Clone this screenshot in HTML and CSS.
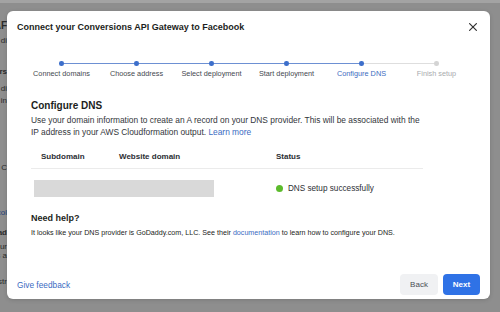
FILE: index.html
```html
<!DOCTYPE html>
<html lang="en">
<head>
<meta charset="utf-8">
<title>Connect your Conversions API Gateway to Facebook</title>
<link rel="stylesheet" href="styles.css">
</head>
<body>
<div class="page">
  <div class="page-top"></div>
  <div class="page-side">
    <div class="frag g0 big">Conversions AF</div>
    <div class="frag g1">Edit di</div>
    <div class="frag g2 bold">Servers</div>
    <div class="frag g3">Add di</div>
    <div class="frag g4">Open in </div>
    <div class="frag g5">Use C</div>
    <div class="frag g6 blue">Protocol</div>
    <div class="frag g7 bold">Upload</div>
    <div class="frag g8">Your</div>
    <div class="frag g9">is a</div>
    <div class="frag g10">Instr</div>
  </div>
</div>

<div class="modal" role="dialog">
  <div class="m-head">
    <h1 class="m-title">Connect your Conversions API Gateway to Facebook</h1>
    <button class="close" aria-label="Close">
      <svg viewBox="0 0 8 8" width="8" height="8"><path d="M0.6 0.6 L7.4 7.4 M7.4 0.6 L0.6 7.4" stroke="#333" stroke-width="1.2" stroke-linecap="round" fill="none"/></svg>
    </button>
  </div>

  <ol class="stepper">
    <li class="step done first"><span class="dot"></span><span class="lbl">Connect domains</span></li>
    <li class="step done"><span class="dot"></span><span class="lbl">Choose address</span></li>
    <li class="step done"><span class="dot"></span><span class="lbl">Select deployment</span></li>
    <li class="step done"><span class="dot"></span><span class="lbl">Start deployment</span></li>
    <li class="step current"><span class="dot"></span><span class="lbl">Configure DNS</span></li>
    <li class="step todo last"><span class="dot"></span><span class="lbl">Finish setup</span></li>
  </ol>

  <section class="content">
    <h2 class="sec-title">Configure DNS</h2>
    <p class="desc">Use your domain information to create an A record on your DNS provider. This will be associated with the<br>IP address in your AWS Cloudformation output. <a class="link" href="#">Learn more</a></p>

    <div class="table">
      <div class="thead">
        <span>Subdomain</span><span>Website domain</span><span>Status</span>
      </div>
      <div class="trow">
        <span class="bar"></span>
        <span class="status"><i class="ok"></i>DNS setup successfully</span>
      </div>
    </div>

    <h3 class="help-title">Need help?</h3>
    <p class="help">It looks like your DNS provider is GoDaddy.com, LLC. See their <a class="link" href="#">documentation</a> to learn how to configure your DNS.</p>
  </section>

  <footer class="m-foot">
    <a class="feedback" href="#">Give feedback</a>
    <div class="actions">
      <button class="btn back">Back</button>
      <button class="btn next">Next</button>
    </div>
  </footer>
</div>
</body>
</html>
```

FILE: styles.css
```css
* { box-sizing: border-box; }
html, body {
  margin: 0;
  padding: 0;
  width: 500px;
  height: 312px;
  overflow: hidden;
}
body {
  font-family: "Liberation Sans", Arial, Helvetica, sans-serif;
  background: #8e8e8e;
  color: #1c1e21;
  position: relative;
}

/* background page (dimmed) */
.page {
  width: 500px;
  height: 312px;
}
.page-top {
  height: 3px;
  background: #a3a3a3;
}
.page-side {
  width: 7px;
  overflow: hidden;
}
.frag {
  display: flex;
  justify-content: flex-end;
  white-space: nowrap;
  font-size: 8px;
  line-height: 9px;
  height: 9px;
  color: #2a2a2a;
}
.frag.big { font-size: 10px; font-weight: bold; }
.frag.bold { font-weight: bold; }
.frag.blue { color: #1f3f78; }
.g0 { margin-top: 17.5px; }
.g1 { margin-top: 6.5px; }
.g2 { margin-top: 22px; }
.g3 { margin-top: 8px; }
.g4 { margin-top: 3px; }
.g5 { margin-top: 58px; }
.g6 { margin-top: 36px; }
.g7 { margin-top: 11px; }
.g8 { margin-top: 5px; }
.g9 { margin-top: 0; }
.g10 { margin-top: 17px; }

/* modal */
.modal {
  position: absolute;
  left: 7px;
  top: 11px;
  width: 483px;
  height: 288px;
  background: #fff;
  border-radius: 6px;
  box-shadow: 0 1px 4px rgba(0,0,0,0.15);
  display: flex;
  flex-direction: column;
}
.m-head {
  display: flex;
  justify-content: space-between;
  align-items: center;
  padding: 10px 10px 0 10px;
}
.m-title {
  margin: 0;
  font-size: 9px;
  line-height: 12px;
  font-weight: bold;
  color: #1c1e21;
}
.close {
  border: 0;
  background: none;
  padding: 0;
  width: 8px;
  height: 8px;
  margin-right: 3px;
  display: flex;
}

/* stepper */
.stepper {
  list-style: none;
  margin: 28px 0 0 0;
  padding: 0 0 0 17px;
  display: grid;
  grid-template-columns: repeat(6, 75px);
}
.step {
  position: relative;
  display: flex;
  flex-direction: column;
  align-items: center;
}
.step::before, .step::after {
  content: "";
  position: absolute;
  top: 1.5px;
  height: 1px;
  width: 50%;
  background: #6d90d3;
}
.step::before { left: 0; }
.step::after { right: 0; }
.step.first::before, .step.last::after { display: none; }
.step.current::after, .step.todo::before { background: #dedede; }
.dot {
  position: relative;
  z-index: 1;
  width: 4.5px;
  height: 4.5px;
  border-radius: 50%;
  background: #3d6fcb;
}
.step.todo .dot { background: #d4d4d4; }
.lbl {
  margin-top: 3.5px;
  font-size: 7.3px;
  line-height: 10px;
  color: #45494f;
  white-space: nowrap;
}
.step.current .lbl { color: #3d6cc0; }
.step.todo .lbl { color: #a9abae; }

/* content */
.content {
  padding: 0 24px;
}
.sec-title {
  margin: 20px 0 0 0;
  font-size: 10px;
  line-height: 13px;
  font-weight: bold;
  color: #1c1e21;
}
.desc {
  margin: 1.7px 0 0 0;
  font-size: 8.4px;
  line-height: 12px;
  color: #33363b;
  white-space: nowrap;
}
.link {
  color: #3b6bc2;
  text-decoration: none;
}
.table {
  margin-top: 14.5px;
  width: 392px;
}
.thead {
  display: grid;
  grid-template-columns: 78px 157px 1fr;
  padding: 0 0 6px 10px;
  font-size: 8px;
  line-height: 10px;
  font-weight: bold;
  color: #2b2e33;
  border-bottom: 1px solid #ebebeb;
}
.trow {
  display: grid;
  grid-template-columns: 245px 1fr;
  align-items: center;
  padding-top: 11px;
}
.bar {
  display: block;
  margin-left: 3px;
  width: 180px;
  height: 17px;
  background: #d9d9d9;
}
.status {
  display: flex;
  align-items: center;
  gap: 4.6px;
  font-size: 8.2px;
  line-height: 10px;
  color: #2b2e33;
}
.ok {
  display: block;
  width: 7.3px;
  height: 7.3px;
  border-radius: 50%;
  background: #5cbb2c;
}
.help-title {
  margin: 15.4px 0 0 0;
  font-size: 9px;
  line-height: 11px;
  font-weight: bold;
  color: #1c1e21;
}
.help {
  margin: 4.7px 0 0 0;
  font-size: 7.15px;
  line-height: 10px;
  color: #1c1e21;
  white-space: nowrap;
}

/* footer */
.m-foot {
  margin-top: auto;
  padding: 0 10px 4px 10px;
  display: flex;
  align-items: center;
  justify-content: space-between;
}
.feedback {
  font-size: 8.3px;
  color: #3b6bc2;
  text-decoration: none;
}
.actions {
  display: flex;
  gap: 5px;
}
.btn {
  height: 21px;
  border: 0;
  border-radius: 4px;
  font-family: inherit;
  font-size: 8px;
  padding: 0;
  text-align: center;
}
.back {
  width: 38px;
  background: #f0f1f3;
  color: #4b4f56;
}
.next {
  width: 37px;
  background: #2f72e6;
  color: #fff;
  font-weight: bold;
}
```
